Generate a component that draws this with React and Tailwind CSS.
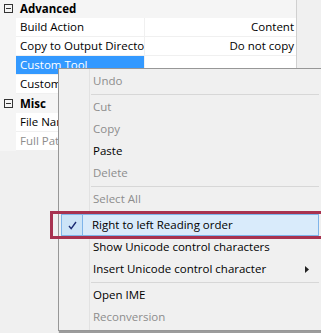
import React from 'react';

const FONT = { fontFamily: '"Segoe UI", "Open Sans", "Noto Sans", sans-serif' };

const MinusBox = () => (
  <span className="flex h-[9px] w-[9px] items-center justify-center border border-[#333]">
    <span className="h-px w-[5px] bg-[#333]" />
  </span>
);

const Category = ({ label }) => (
  <div className="flex h-[19px] items-center bg-[#f5f5f5]">
    <div className="flex w-[16px] justify-center pl-px">
      <MinusBox />
    </div>
    <span className="pl-1 text-[11.5px] font-bold text-black">{label}</span>
  </div>
);

const Property = ({ name, value, selected, muted }) => (
  <div className="flex h-[19px] bg-[#f5f5f5]">
    <div className="w-[16px] shrink-0" />
    <div
      className={`flex w-[128px] shrink-0 items-center overflow-hidden whitespace-nowrap border-b border-[#f0f0f0] pl-1 text-[11.5px] ${
        selected ? 'bg-[#3399ff] text-white' : muted ? 'bg-white text-[#8d8d8d]' : 'bg-white text-black'
      }`}
    >
      {name}
    </div>
    <div className="w-px shrink-0 bg-[#f0f0f0]" />
    <div className="flex flex-1 items-center justify-end border-b border-[#f0f0f0] bg-white pr-[2px] text-[11.5px] text-black">
      {value}
    </div>
  </div>
);

const Separator = () => (
  <div className="flex h-[4px] items-center">
    <div className="w-[31px]" />
    <div className="ml-[1px] mr-[18px] h-px flex-1 bg-[#d7d7d7]" />
  </div>
);

const Item = ({ label, disabled, submenu }) => (
  <div className="flex h-[22px] items-center">
    <div className="w-[31px] shrink-0" />
    <span className={`pl-[3px] text-[11.5px] ${disabled ? 'text-[#8d8d8d]' : 'text-black'}`}>{label}</span>
    {submenu && (
      <svg className="ml-auto mr-[28px]" width="4" height="7" viewBox="0 0 4 7">
        <path d="M0 0 L4 3.5 L0 7 Z" fill="#222" />
      </svg>
    )}
  </div>
);

const CheckedItem = ({ label }) => (
  <div className="relative flex h-[22px] items-center">
    <div className="absolute -left-[9px] -top-[3px] h-[28px] w-[280px] border-[3px] border-[#a8324f]" />
    <div className="ml-[2px] flex h-full w-[258px] items-center border border-[#7eb4ea] bg-[#d9ebfb]">
      <div className="flex h-full w-[21px] items-center justify-center border-r border-[#7eb4ea] bg-[#cce4f7]">
        <svg width="9" height="9" viewBox="0 0 9 9">
          <path d="M1 5 L3.2 7.6 L8 1" fill="none" stroke="#1c2c73" strokeWidth="1.4" />
        </svg>
      </div>
      <span className="pl-[9px] text-[11.5px] text-black">{label}</span>
    </div>
  </div>
);

export default function App() {
  return (
    <div className="relative h-[333px] w-[321px] overflow-hidden bg-[#f0f0f0]" style={FONT}>
      <div className="flex">
        <div className="-mt-px w-[296px] shrink-0">
          <Category label="Advanced" />
          <Property name="Build Action" value="Content" />
          <Property name="Copy to Output Directory" value="Do not copy" />
          <Property name="Custom Tool" value="" selected />
          <Property name="Custom Tool Namespace" value="" />
          <Category label="Misc" />
          <Property name="File Name" value="" />
          <Property name="Full Path" value="" muted />
        </div>
        <div className="h-[68px] w-px shrink-0 bg-[#d0d0d0]" />
        <div className="h-[68px] flex-1 bg-[#f0f0f0]" />
      </div>

      <div className="absolute left-[58px] top-[68px] h-[263px] w-[280px] border border-[#979797] bg-[#f0f0f0] pt-px shadow-[1px_2px_1px_rgba(0,0,0,0.35)]">
        <div className="absolute bottom-0 left-[30px] top-0 w-px bg-[#e2e2e2]" />
        <div className="relative">
          <Item label="Undo" disabled />
          <Separator />
          <Item label="Cut" disabled />
          <Item label="Copy" disabled />
          <Item label="Paste" />
          <Item label="Delete" disabled />
          <Separator />
          <Item label="Select All" disabled />
          <Separator />
          <CheckedItem label="Right to left Reading order" />
          <Item label="Show Unicode control characters" />
          <Item label="Insert Unicode control character" submenu />
          <Separator />
          <Item label="Open IME" />
          <Item label="Reconversion" disabled />
        </div>
      </div>
    </div>
  );
}
